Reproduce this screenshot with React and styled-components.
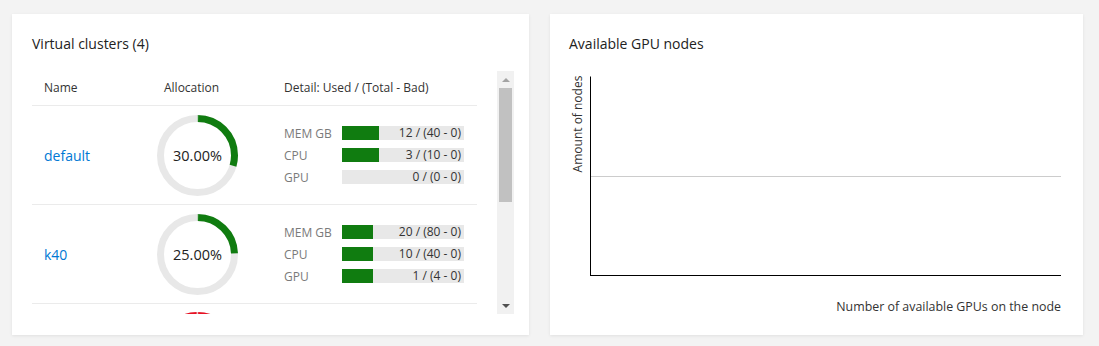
import React from 'react';
import styled, { createGlobalStyle } from 'styled-components';

const GlobalStyle = createGlobalStyle`
  body {
    margin: 0;
    background: #f3f3f3;
    font-family: 'Segoe UI', 'Open Sans', 'Noto Sans', sans-serif;
    color: #333;
  }
`;

const Page = styled.div`
  display: grid;
  grid-template-columns: 517px 533px;
  column-gap: 21px;
  padding: 14px 16px 11px 12px;
`;

const Card = styled.div`
  background: #fff;
  box-shadow: 0 1px 3px rgba(0, 0, 0, 0.08);
  padding: ${({ $right }) => ($right ? '20px 20px 19px 19px' : '20px 15px 21px 20px')};
  display: flex;
  flex-direction: column;
`;

const Title = styled.div`
  font-size: 14px;
  line-height: 20px;
  color: #222;
  margin-bottom: 16px;
`;

const ScrollArea = styled.div`
  display: flex;
  height: 244px;
`;

const Viewport = styled.div`
  flex: 1;
  overflow: hidden;
  padding-right: 20px;
`;

const Table = styled.table`
  border-collapse: collapse;
  width: 445px;
  table-layout: fixed;
`;

const Th = styled.th`
  text-align: left;
  font-weight: 400;
  font-size: 12px;
  color: #333;
  height: 35px;
  padding: 0 0 0 12px;
  border-bottom: 1px solid #ebebeb;
  width: ${({ $w }) => $w - 12}px;
`;

const Td = styled.td`
  height: 98px;
  padding: 0 0 0 ${({ $pad }) => $pad ?? 12}px;
  border-bottom: 1px solid #ebebeb;
  vertical-align: ${({ $top }) => ($top ? 'top' : 'middle')};
  padding-top: ${({ $top }) => ($top ? '8px' : '0')};
`;

const NameLink = styled.a`
  font-size: 14px;
  color: #0078d4;
  text-decoration: none;
`;

const DonutBox = styled.div`
  position: relative;
  width: 81px;
  height: 81px;
`;

const DonutLabel = styled.div`
  position: absolute;
  inset: 0;
  display: flex;
  align-items: center;
  justify-content: center;
  font-size: 14.5px;
  color: #222;
`;

const DetailList = styled.div`
  display: flex;
  flex-direction: column;
  gap: 8px;
`;

const DetailRow = styled.div`
  display: flex;
  align-items: center;
  height: 14px;
`;

const DetailName = styled.span`
  width: 58px;
  font-size: 12px;
  color: #7a7a7a;
`;

const Bar = styled.div`
  position: relative;
  width: 122px;
  height: 14px;
  background: #e8e8e8;
`;

const BarFill = styled.div`
  height: 100%;
  background: #107c10;
`;

const BarText = styled.span`
  position: absolute;
  inset: 0;
  padding-right: 3px;
  text-align: right;
  font-size: 12px;
  line-height: 14px;
  color: #333;
`;

const Scrollbar = styled.div`
  width: 17px;
  margin-top: 1px;
  background: #f1f1f1;
  display: flex;
  flex-direction: column;
`;

const ScrollButton = styled.div`
  height: 17px;
  display: flex;
  align-items: center;
  justify-content: center;
  &::after {
    content: '';
    border-left: 4px solid transparent;
    border-right: 4px solid transparent;
    ${({ $down }) =>
      $down ? 'border-top: 4px solid #505050;' : 'border-bottom: 4px solid #a3a3a3;'}
  }
`;

const Thumb = styled.div`
  height: 114px;
  margin: 0 2px;
  background: #c1c1c1;
`;

const Spacer = styled.div`
  flex: 1;
`;

// the last cluster sits below the fold: only the top of its ring shows
const clusters = [
  {
    name: 'default',
    percent: 30,
    color: '#107c10',
    details: [
      ['MEM GB', 12, 40, 0],
      ['CPU', 3, 10, 0],
      ['GPU', 0, 0, 0],
    ],
  },
  {
    name: 'k40',
    percent: 25,
    color: '#107c10',
    details: [
      ['MEM GB', 20, 80, 0],
      ['CPU', 10, 40, 0],
      ['GPU', 1, 4, 0],
    ],
  },
  {
    name: 'vc3',
    percent: 100,
    color: '#e81123',
    hidden: true,
    details: [],
  },
];

const Donut = ({ percent, color, hideLabel }) => {
  const r = 37;
  const c = 2 * Math.PI * r;
  const gap = 1.2;
  const used = Math.max(0, (c * percent) / 100 - gap);
  return (
    <DonutBox>
      <svg width="81" height="81" viewBox="0 0 81 81">
        <g transform="rotate(-90 40.5 40.5)">
          <circle cx="40.5" cy="40.5" r={r} fill="none" stroke="#e8e8e8" strokeWidth="7" />
          <circle
            cx="40.5"
            cy="40.5"
            r={r}
            fill="none"
            stroke={color}
            strokeWidth="7"
            strokeDasharray={`${used} ${c}`}
          />
          <circle
            cx="40.5"
            cy="40.5"
            r={r}
            fill="none"
            stroke="#fff"
            strokeWidth="8"
            strokeDasharray={`${gap} ${c}`}
            strokeDashoffset={gap / 2}
          />
        </g>
      </svg>
      {!hideLabel && <DonutLabel>{percent.toFixed(2)}%</DonutLabel>}
    </DonutBox>
  );
};

const Detail = ({ label, used, total, bad }) => {
  const avail = total - bad;
  const w = avail > 0 ? (used / avail) * 100 : 0;
  return (
    <DetailRow>
      <DetailName>{label}</DetailName>
      <Bar>
        <BarFill style={{ width: `${w}%` }} />
        <BarText>
          {used} / ({total} - {bad})
        </BarText>
      </Bar>
    </DetailRow>
  );
};

const Chart = () => (
  <svg width="494" height="246" viewBox="0 0 494 246" fontFamily="'Segoe UI', 'Open Sans', sans-serif">
    <line x1="21" y1="106.5" x2="492" y2="106.5" stroke="#cccccc" />
    <line x1="21.5" y1="6.5" x2="21.5" y2="205.5" stroke="#000" />
    <line x1="21" y1="205.5" x2="492" y2="205.5" stroke="#000" />
    <text x="13" y="54" fontSize="12" fill="#333" textAnchor="middle" transform="rotate(-90 13 54)">
      Amount of nodes
    </text>
    <text x="492" y="241" fontSize="12.4" fill="#333" textAnchor="end">
      Number of available GPUs on the node
    </text>
  </svg>
);

export default function App() {
  return (
    <>
      <GlobalStyle />
      <Page>
        <Card>
          <Title>Virtual clusters (4)</Title>
          <ScrollArea>
            <Viewport>
              <Table>
                <thead>
                  <tr>
                    <Th $w={120}>Name</Th>
                    <Th $w={120}>Allocation</Th>
                    <Th $w={205}>Detail: Used / (Total - Bad)</Th>
                  </tr>
                </thead>
                <tbody>
                  {clusters.map((vc) => (
                    <tr key={vc.name}>
                      <Td>{!vc.hidden && <NameLink href="#">{vc.name}</NameLink>}</Td>
                      <Td $pad={5} $top={vc.hidden}>
                        <Donut percent={vc.percent} color={vc.color} hideLabel={vc.hidden} />
                      </Td>
                      <Td>
                        <DetailList>
                          {vc.details.map(([label, used, total, bad]) => (
                            <Detail key={label} label={label} used={used} total={total} bad={bad} />
                          ))}
                        </DetailList>
                      </Td>
                    </tr>
                  ))}
                </tbody>
              </Table>
            </Viewport>
            <Scrollbar>
              <ScrollButton />
              <Thumb />
              <Spacer />
              <ScrollButton $down />
            </Scrollbar>
          </ScrollArea>
        </Card>
        <Card $right>
          <Title>Available GPU nodes</Title>
          <Chart />
        </Card>
      </Page>
    </>
  );
}
